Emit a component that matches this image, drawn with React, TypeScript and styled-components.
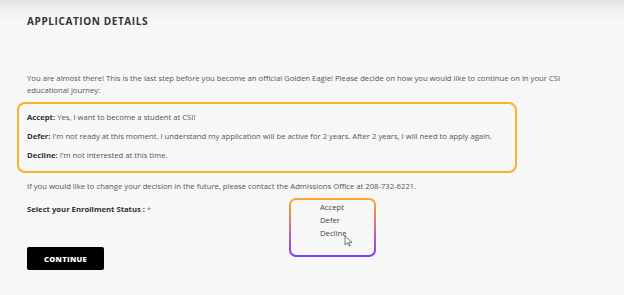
import React from 'react'
import styled, { createGlobalStyle } from 'styled-components'

const GlobalStyle = createGlobalStyle`
    html, body {
        margin: 0;
        padding: 0;
        background: #f7f7f7;
    }
    body {
        font-family: "Open Sans", "Noto Sans", sans-serif;
        color: #555;
    }
`

const Page = styled.div`
    width: 624px;
    height: 295px;
    box-sizing: border-box;
    padding: 15px 0 0 27px;
    background: linear-gradient(#e4e4e4 0px, #f3f3f3 12px, #f7f7f7 22px);
    overflow: hidden;
`

const Heading = styled.h2`
    margin: 0;
    font-size: 10px;
    line-height: 12px;
    font-weight: 700;
    letter-spacing: 0.6px;
    color: #333;
`

const Intro = styled.p`
    margin: 45px 0 0;
    width: 575px;
    font-size: 7.7px;
    line-height: 12px;
    color: #555;
`

const Choices = styled.div`
    margin: 6px 0 0 -10px;
    width: 500px;
    height: 71px;
    box-sizing: border-box;
    border: 2px solid #fbb12b;
    border-radius: 8px;
    padding: 7px 0 0 8px;
    display: flex;
    flex-direction: column;
    gap: 7px;
`

const Choice = styled.div`
    font-size: 7.7px;
    line-height: 12px;
    color: #555;
    white-space: nowrap;
    b {
        color: #333;
        font-weight: 700;
    }
`

const Note = styled.p`
    margin: 7px 0 0;
    font-size: 7.7px;
    line-height: 12px;
`

const StatusRow = styled.div`
    margin-top: 11px;
    display: flex;
    align-items: flex-start;
`

const Label = styled.div`
    width: 285px;
    font-size: 7.7px;
    line-height: 12px;
    font-weight: 700;
    color: #333;
    span {
        color: #e0474c;
        font-weight: 400;
    }
`

const Options = styled.div`
    position: relative;
    display: flex;
    flex-direction: column;
    margin-top: -2px;
    &::before {
        content: '';
        position: absolute;
        left: -23px;
        top: -3px;
        width: 87px;
        height: 59px;
        box-sizing: border-box;
        border-radius: 7px;
        border: 2px solid transparent;
        background: linear-gradient(#f7f7f7, #f7f7f7) padding-box,
            linear-gradient(#fbab2a, #c86c98 55%, #7b3dff) border-box;
        pointer-events: none;
    }
`

const Option = styled.label`
    position: relative;
    display: flex;
    align-items: center;
    gap: 3px;
    font-size: 7.7px;
    line-height: 13px;
    color: #444;
`

const Dot = styled.span`
    width: 5px;
    height: 5px;
    border-radius: 50%;
    background: #fff;
    border: 1px solid #eee;
    box-sizing: border-box;
`

const Cursor = styled.svg`
    position: absolute;
    left: 32px;
    top: 8px;
`

const Button = styled.button`
    margin-top: 7px;
    width: 77px;
    height: 23px;
    background: #000;
    color: #fff;
    border: none;
    border-radius: 2px;
    font-family: "Open Sans", sans-serif;
    font-size: 7.6px;
    font-weight: 800;
    letter-spacing: 0.3px;
    padding: 0;
`

export default function App() {
    return (
        <>
            <GlobalStyle />
            <Page>
                <Heading>APPLICATION DETAILS</Heading>
                <Intro>
                    You are almost there! This is the last step before you become an official Golden Eagle! Please decide on how you would like to continue on in your CSI educational journey:
                </Intro>
                <Choices>
                    <Choice><b>Accept:</b> Yes, I want to become a student at CSI!</Choice>
                    <Choice><b>Defer:</b> I'm not ready at this moment. I understand my application will be active for 2 years. After 2 years, I will need to apply again.</Choice>
                    <Choice><b>Decline:</b> I'm not interested at this time.</Choice>
                </Choices>
                <Note>If you would like to change your decision in the future, please contact the Admissions Office at 208-732-6221.</Note>
                <StatusRow>
                    <Label>Select your Enrollment Status : <span>*</span></Label>
                    <Options>
                        <Option><Dot />Accept</Option>
                        <Option><Dot />Defer</Option>
                        <Option>
                            <Dot />Decline
                            <Cursor width="9" height="12" viewBox="0 0 9 12">
                                <path d="M1 1 L1 10 L3.3 7.8 L5 11 L6.3 10.4 L4.7 7.3 L8 7.3 Z" fill="#fff" stroke="#555" strokeWidth="0.8" strokeLinejoin="round" />
                            </Cursor>
                        </Option>
                    </Options>
                </StatusRow>
                <Button>CONTINUE</Button>
            </Page>
        </>
    )
}
